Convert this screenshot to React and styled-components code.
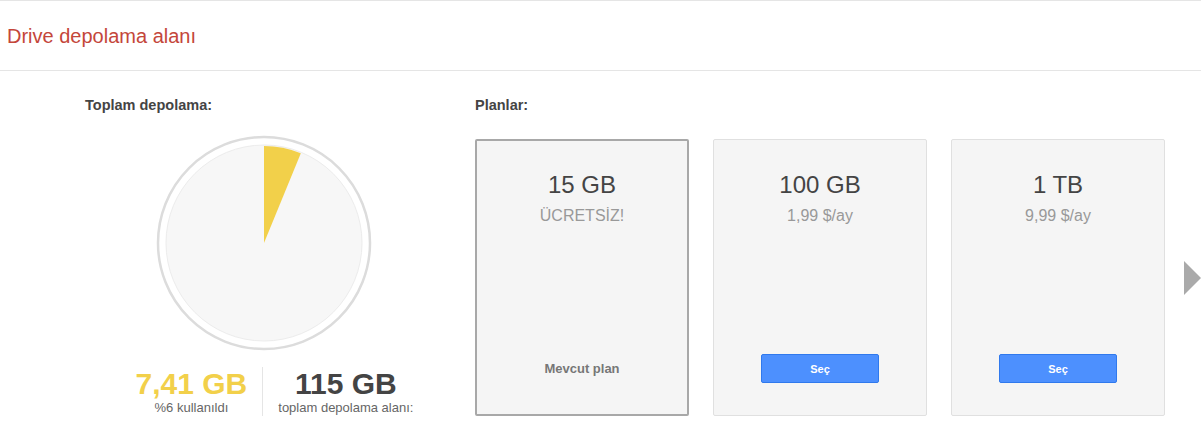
import React from "react";
import styled, { createGlobalStyle } from "styled-components";

const Global = createGlobalStyle`
  html, body { margin: 0; padding: 0; background: #fff; }
  body { font-family: "Liberation Sans", Arial, sans-serif; }
`;

const Page = styled.div`
  width: 1201px;
  height: 436px;
  overflow: hidden;
  border-top: 1px solid #e5e5e5;
  box-sizing: border-box;
`;

const Header = styled.div`
  height: 70px;
  border-bottom: 1px solid #e5e5e5;
  display: flex;
  align-items: center;
  padding-left: 7px;
  padding-bottom: 1px;
  box-sizing: border-box;
`;

const Title = styled.h1`
  margin: 0;
  font-size: 20px;
  font-weight: normal;
  color: #c4463a;
  margin-top: 2px;
`;

const Main = styled.div`
  display: flex;
  padding: 26px 0 0 85px;
  gap: 33px;
`;

const Section = styled.div`
  display: flex;
  flex-direction: column;
  width: ${(p) => p.$width || "auto"};
`;

const Label = styled.div`
  font-size: 14.5px;
  font-weight: bold;
  color: #444;
  line-height: 16px;
`;

const PieWrap = styled.div`
  display: flex;
  justify-content: center;
  margin-top: 22px;
  padding-left: 1px;
`;

const Stats = styled.div`
  display: flex;
  justify-content: center;
  margin-top: 16px;
  margin-left: 22px;
`;

const Stat = styled.div`
  display: flex;
  flex-direction: column;
  align-items: center;
  padding: 0 15px;
  & + & {
    border-left: 1px solid #e5e5e5;
  }
`;

const StatValue = styled.div`
  font-size: 30px;
  font-weight: bold;
  line-height: 33px;
  color: ${(p) => p.$color};
`;

const StatCaption = styled.div`
  font-size: 13px;
  color: #666;
  line-height: 16px;
`;

const PlansRow = styled.div`
  display: flex;
  align-items: center;
  margin-top: 26px;
  gap: 19px;
`;

const Cards = styled.div`
  display: flex;
  gap: 24px;
`;

const Card = styled.div`
  width: 214px;
  height: 277px;
  box-sizing: border-box;
  background: #f5f5f5;
  border: ${(p) => (p.$current ? "2px solid #a8a8a8" : "1px solid #e0e0e0")};
  border-radius: 2px;
  display: flex;
  flex-direction: column;
  align-items: center;
  padding-top: ${(p) => (p.$current ? "30px" : "31px")};
  padding-bottom: ${(p) => (p.$current ? "31px" : "32px")};
`;

const Size = styled.div`
  font-size: 24px;
  color: #444;
  line-height: 28px;
`;

const Price = styled.div`
  font-size: 16px;
  color: #999;
  line-height: 19px;
  margin-top: 7px;
`;

const Footer = styled.div`
  margin-top: auto;
  height: 29px;
  display: flex;
  align-items: center;
  justify-content: center;
`;

const CurrentText = styled.div`
  font-size: 13px;
  font-weight: bold;
  color: #777;
`;

const SelectButton = styled.button`
  width: 118px;
  height: 29px;
  background: #4d90fe;
  border: 1px solid #3079ed;
  border-radius: 2px;
  color: #fff;
  font-family: "Liberation Sans", Arial, sans-serif;
  font-size: 11px;
  font-weight: bold;
  padding: 0;
  cursor: pointer;
`;

const Arrow = styled.svg`
  display: block;
  flex: none;
`;

function Pie() {
  const cx = 108, cy = 108, r = 97;
  const pct = 0.062;
  const a = pct * 2 * Math.PI;
  const x = cx + r * Math.sin(a);
  const y = cy - r * Math.cos(a);
  return (
    <svg width="216" height="216" viewBox="0 0 216 216">
      <circle cx={cx} cy={cy} r="106" fill="#fff" stroke="#dcdcdc" strokeWidth="2.5" />
      <circle cx={cx} cy={cy} r="98" fill="#f7f7f7" stroke="#ececec" strokeWidth="1" />
      <path d={`M${cx} ${cy} L${cx} ${cy - r} A${r} ${r} 0 0 1 ${x} ${y} Z`} fill="#f2d04a" />
    </svg>
  );
}

const plans = [
  { size: "15 GB", price: "ÜCRETSİZ!", current: true },
  { size: "100 GB", price: "1,99 $/ay" },
  { size: "1 TB", price: "9,99 $/ay" },
];

export default function App() {
  return (
    <>
      <Global />
      <Page>
        <Header>
          <Title>Drive depolama alanı</Title>
        </Header>
        <Main>
          <Section $width="360px">
            <Label>Toplam depolama:</Label>
            <PieWrap>
              <Pie />
            </PieWrap>
            <Stats>
              <Stat>
                <StatValue $color="#f2d04a">7,41 GB</StatValue>
                <StatCaption>%6 kullanıldı</StatCaption>
              </Stat>
              <Stat>
                <StatValue $color="#444">115 GB</StatValue>
                <StatCaption>toplam depolama alanı:</StatCaption>
              </Stat>
            </Stats>
          </Section>
          <Section>
            <Label>Planlar:</Label>
            <PlansRow>
              <Cards>
                {plans.map((p) => (
                  <Card key={p.size} $current={p.current}>
                    <Size>{p.size}</Size>
                    <Price>{p.price}</Price>
                    <Footer>
                      {p.current ? (
                        <CurrentText>Mevcut plan</CurrentText>
                      ) : (
                        <SelectButton>Seç</SelectButton>
                      )}
                    </Footer>
                  </Card>
                ))}
              </Cards>
              <Arrow width="17" height="34" viewBox="0 0 17 34">
                <polygon points="0,0 17,17 0,34" fill="#aaa" />
              </Arrow>
            </PlansRow>
          </Section>
        </Main>
      </Page>
    </>
  );
}
